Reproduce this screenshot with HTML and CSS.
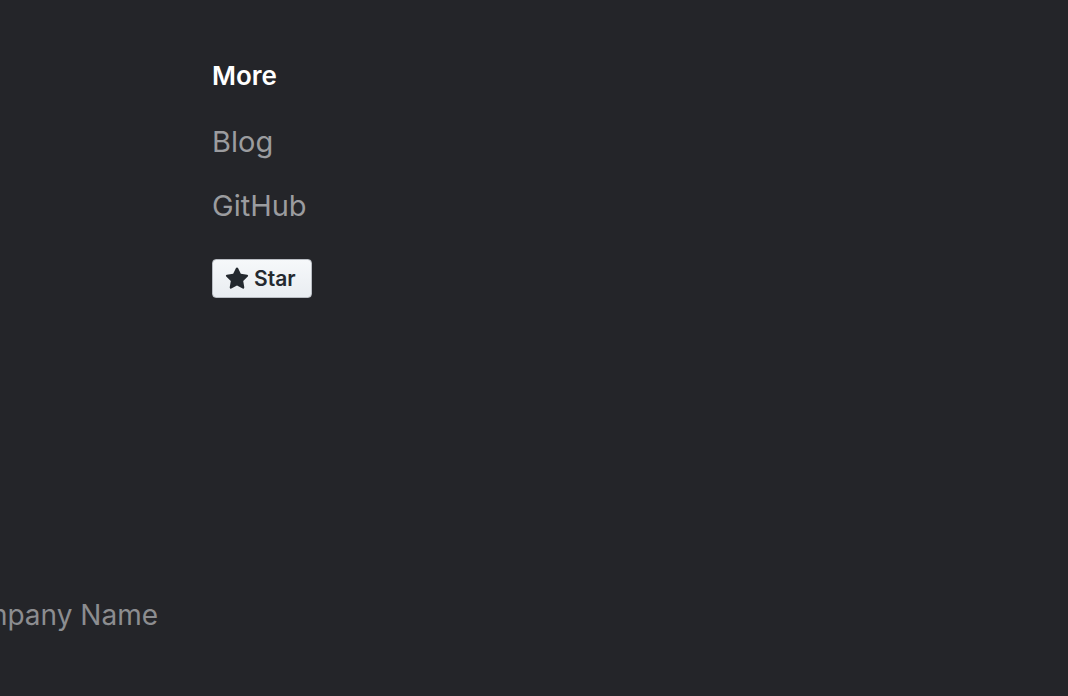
FILE: index.html
```html
<!DOCTYPE html>
<html lang="en">
<head>
<meta charset="utf-8">
<title>Footer</title>
<link rel="stylesheet" href="styles.css">
</head>
<body>
<footer class="footer">
  <div class="links">
    <div class="col">
      <div class="title">More</div>
      <ul class="items">
        <li><a class="link" href="#">Blog</a></li>
        <li><a class="link" href="#">GitHub</a></li>
        <li>
          <a class="star" href="#">
            <svg class="star-icon" viewBox="0 0 16 16" width="18" height="18" aria-hidden="true"><path d="M8 .25a.75.75 0 0 1 .673.418l1.882 3.815 4.21.612a.75.75 0 0 1 .416 1.279l-3.046 2.97.719 4.192a.751.751 0 0 1-1.088.791L8 12.347l-3.766 1.98a.75.75 0 0 1-1.088-.79l.72-4.194L.818 6.374a.75.75 0 0 1 .416-1.28l4.21-.611L7.327.668A.75.75 0 0 1 8 .25Z"/></svg>
            <span>Star</span>
          </a>
        </li>
      </ul>
    </div>
  </div>
  <div class="bottom">
    <div class="copyright"><span>Copyright © 2024 My Company Name</span></div>
  </div>
</footer>
</body>
</html>
```
FILE: styles.css
```css
html, body {
  margin: 0;
  padding: 0;
  height: 100%;
}
body {
  background: #242529;
  font-family: Inter, "Noto Sans", "Liberation Sans", sans-serif;
  overflow: hidden;
}
.footer {
  height: 696px;
  display: flex;
  flex-direction: column;
  justify-content: space-between;
}
.links {
  padding: 59px 0 0 212px;
}
.title {
  color: #ffffff;
  font-size: 26px;
  font-weight: 600;
  line-height: 34px;
  margin-bottom: 29px;
}
.items {
  list-style: none;
  margin: 0;
  padding: 0;
  display: flex;
  flex-direction: column;
  align-items: flex-start;
}
.link {
  display: block;
  color: #9b9c9f;
  font-size: 29px;
  line-height: 40px;
  margin-bottom: 24px;
  text-decoration: none;
}
.star {
  display: flex;
  align-items: center;
  gap: 5px;
  box-sizing: border-box;
  width: 100px;
  height: 39px;
  padding: 0 10px 0 12px;
  margin-top: 9px;
  border: 1px solid #b9bdc3;
  border-radius: 4px;
  background: linear-gradient(#f6f8fa, #e9edf1);
  color: #24292f;
  font-size: 21px;
  font-weight: 600;
  text-decoration: none;
}
.star-icon {
  width: 24px;
  height: 24px;
  fill: #24292f;
  flex: none;
}
.bottom {
  padding-bottom: 61px;
}
.copyright {
  width: 158px;
  display: flex;
  justify-content: flex-end;
  white-space: nowrap;
  color: #8c8d90;
  font-size: 28px;
  line-height: 40px;
}
```
